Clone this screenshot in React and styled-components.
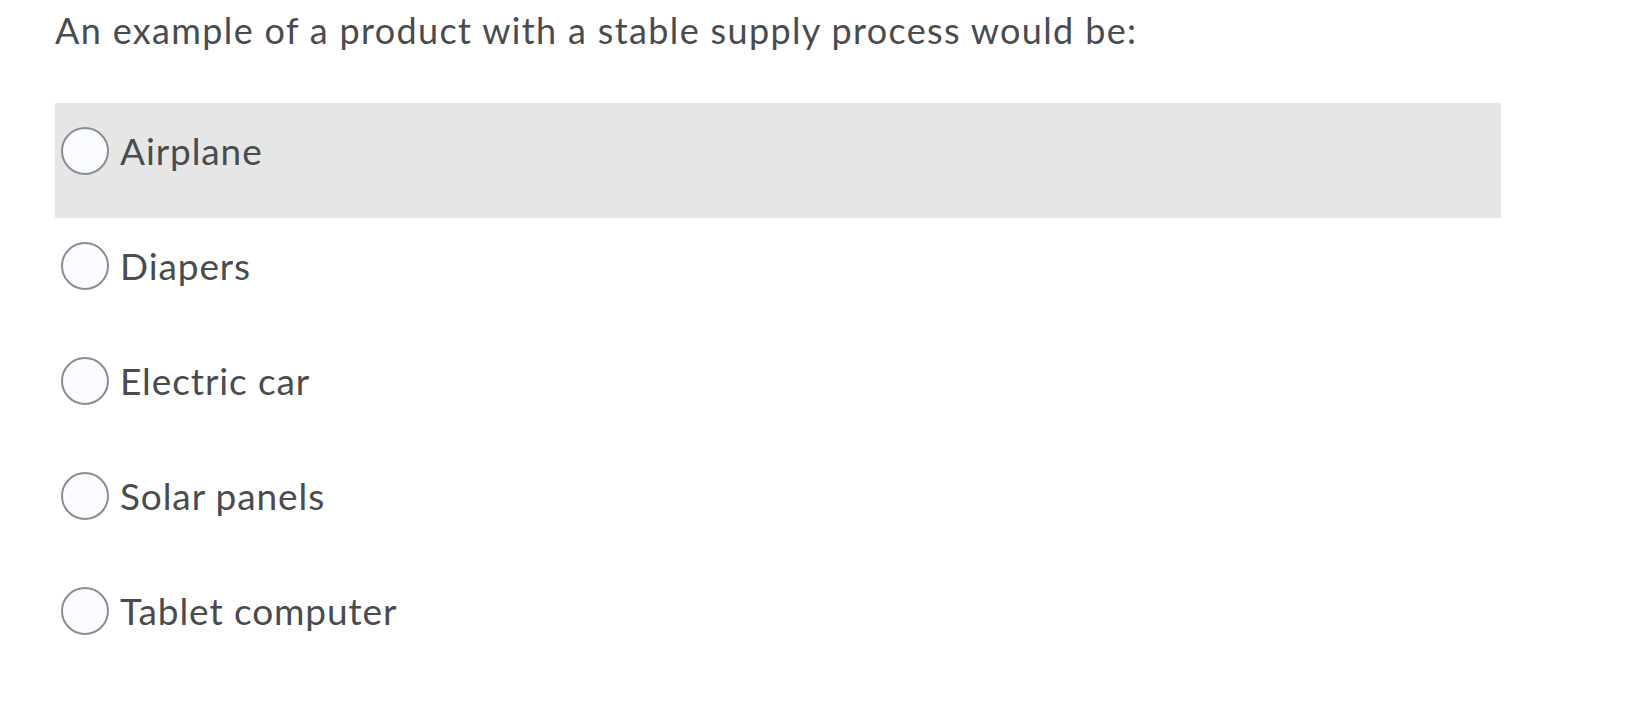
import React from "react";
import styled, { createGlobalStyle } from "styled-components";

const Global = createGlobalStyle`
  html, body { margin: 0; padding: 0; background: #ffffff; }
  body { font-family: Lato, "Open Sans", sans-serif; color: #494c4e; }
`;

const Page = styled.div`
  width: 1446px;
  padding: 9px 0 0 55px;
`;

const Question = styled.h1`
  margin: 0 0 51px 0;
  font-family: Lato, sans-serif;
  font-weight: 400;
  font-size: 36px;
  letter-spacing: 1.35px;
  line-height: 1.2;
  color: #494c4e;
`;

const Options = styled.div`
  display: flex;
  flex-direction: column;
`;

const Row = styled.label`
  display: flex;
  align-items: center;
  gap: 11px;
  height: 115px;
  box-sizing: border-box;
  padding: 24px 0 43px 6px;
  background: ${(p) => (p.$hover ? "#e6e6e6" : "transparent")};
  cursor: pointer;
`;

const Radio = styled.span`
  flex: none;
  width: 48px;
  height: 48px;
  box-sizing: border-box;
  border-radius: 50%;
  border: 2px solid #898e93;
  background: #f9fbff;
`;

const Label = styled.span`
  font-family: Lato, sans-serif;
  font-size: 37px;
  letter-spacing: 0.9px;
  line-height: 1.2;
  color: #494c4e;
`;

const options = ["Airplane", "Diapers", "Electric car", "Solar panels", "Tablet computer"];

export default function App() {
  return (
    <>
      <Global />
      <Page>
        <Question>An example of a product with a stable supply process would be:</Question>
        <Options>
          {options.map((o, i) => (
            <Row key={o} $hover={i === 0}>
              <Radio />
              <Label>{o}</Label>
            </Row>
          ))}
        </Options>
      </Page>
    </>
  );
}
